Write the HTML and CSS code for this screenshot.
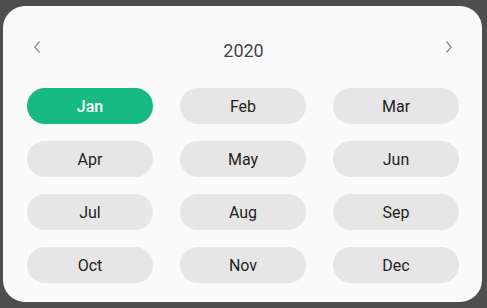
FILE: index.html
```html
<!DOCTYPE html>
<html>
<head>
<meta charset="utf-8">
<link rel="stylesheet" href="styles.css">
</head>
<body>
<div class="card">
  <div class="header">
    <svg class="chev" width="6" height="12" viewBox="0 0 6 12"><path d="M5.5 0.5 L0.8 6 L5.5 11.5" fill="none" stroke="#8a8a8a" stroke-width="1.3"/></svg>
    <span class="year">2020</span>
    <svg class="chev" width="6" height="12" viewBox="0 0 6 12"><path d="M0.5 0.5 L5.2 6 L0.5 11.5" fill="none" stroke="#8a8a8a" stroke-width="1.3"/></svg>
  </div>
  <div class="grid">
    <div class="month active">Jan</div>
    <div class="month">Feb</div>
    <div class="month">Mar</div>
    <div class="month">Apr</div>
    <div class="month">May</div>
    <div class="month">Jun</div>
    <div class="month">Jul</div>
    <div class="month">Aug</div>
    <div class="month">Sep</div>
    <div class="month">Oct</div>
    <div class="month">Nov</div>
    <div class="month">Dec</div>
  </div>
</div>
</body>
</html>
```
FILE: styles.css
```css
html, body {
  margin: 0;
  padding: 0;
}
body {
  background: #4e4e4e;
  width: 487px;
  height: 308px;
  box-sizing: border-box;
  padding: 6px 5px 6px 3px;
  font-family: Roboto, "Liberation Sans", sans-serif;
}
.card {
  width: 479px;
  height: 296px;
  box-sizing: border-box;
  background: #fafafa;
  border-radius: 22px;
  padding: 24px 23px 19px 24px;
}
.header {
  height: 40px;
  margin: 0 7px 18px 7px;
  display: flex;
  align-items: center;
  justify-content: space-between;
}
.chev {
  display: block;
  margin-top: -6px;
}
.year {
  font-size: 18px;
  color: #454545;
  margin-left: 1px;
}
.grid {
  display: grid;
  grid-template-columns: repeat(3, 126px);
  grid-auto-rows: 36px;
  column-gap: 27px;
  row-gap: 17px;
}
.month {
  background: #e6e6e6;
  border-radius: 18px;
  display: flex;
  align-items: center;
  justify-content: center;
  font-size: 16px;
  font-weight: 400;
  color: #1e1e1e;
}
.month.active {
  background: #15b981;
  color: #ffffff;
  font-weight: 500;
}
```
